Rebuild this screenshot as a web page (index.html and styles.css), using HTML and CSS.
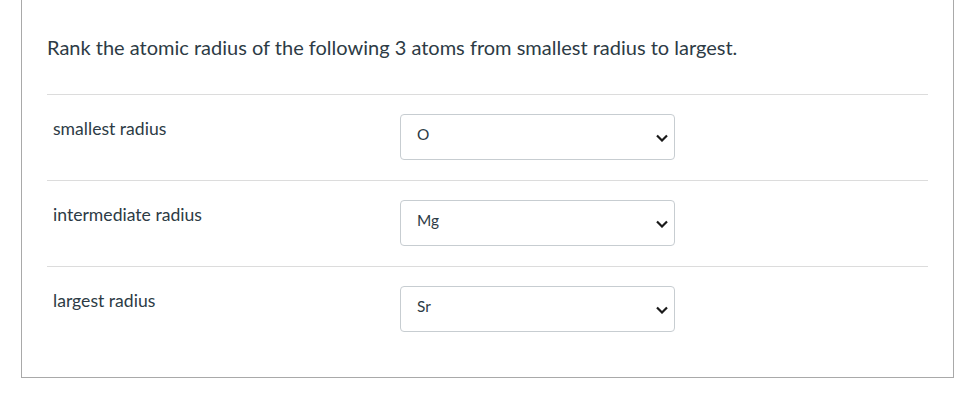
FILE: index.html
```html
<!DOCTYPE html>
<html lang="en">
<head>
<meta charset="utf-8">
<title>Rank atomic radius</title>
<link rel="stylesheet" href="styles.css">
</head>
<body>
<div class="card">
  <p class="question">Rank the atomic radius of the following 3 atoms from smallest radius to largest.</p>
  <div class="answers">
    <div class="row">
      <div class="label">smallest radius</div>
      <div class="select"><span class="value">O</span><svg class="chev" width="12" height="8" viewBox="0 0 12 8"><path d="M1 1.5 L6 6.5 L11 1.5" fill="none" stroke="#1a1a1a" stroke-width="2.2"/></svg></div>
    </div>
    <div class="row">
      <div class="label">intermediate radius</div>
      <div class="select"><span class="value">Mg</span><svg class="chev" width="12" height="8" viewBox="0 0 12 8"><path d="M1 1.5 L6 6.5 L11 1.5" fill="none" stroke="#1a1a1a" stroke-width="2.2"/></svg></div>
    </div>
    <div class="row">
      <div class="label">largest radius</div>
      <div class="select"><span class="value">Sr</span><svg class="chev" width="12" height="8" viewBox="0 0 12 8"><path d="M1 1.5 L6 6.5 L11 1.5" fill="none" stroke="#1a1a1a" stroke-width="2.2"/></svg></div>
    </div>
  </div>
</div>
</body>
</html>
```

FILE: styles.css
```css
html, body {
  margin: 0;
  padding: 0;
  background: #ffffff;
}
body {
  font-family: Lato, "Open Sans", sans-serif;
  color: #2d3b45;
}
.card {
  margin-left: 21px;
  width: 933px;
  border: 1px solid #a9a9a9;
  border-top: none;
  padding: 0 25px 25px 25px;
  box-sizing: border-box;
}
.question {
  margin: 0;
  box-sizing: border-box;
  padding-top: 35px;
  font-size: 20px;
  line-height: 25px;
  height: 94px;
}
.row {
  border-top: 1px solid #dcdcdc;
  display: flex;
  align-items: flex-start;
  padding: 19px 0 20px 6px;
}
.label {
  width: 347px;
  font-size: 17.6px;
  line-height: 22px;
  padding-top: 4px;
}
.select {
  width: 275px;
  height: 46px;
  box-sizing: border-box;
  border: 1px solid #c7cdd1;
  border-radius: 4px;
  display: flex;
  align-items: flex-start;
  justify-content: space-between;
  padding: 10px 6px 0 16px;
}
.value {
  font-size: 15.4px;
  line-height: 18px;
}
.chev {
  display: block;
  align-self: center;
  margin-top: -9px;
}
```
